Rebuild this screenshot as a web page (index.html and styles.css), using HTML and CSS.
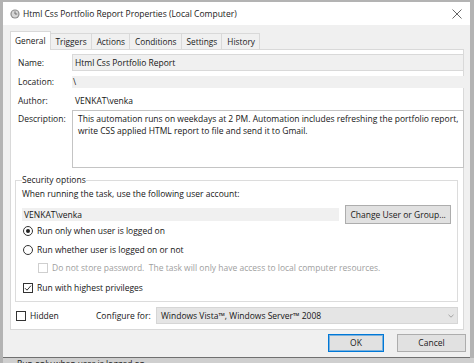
FILE: index.html
```html
<!DOCTYPE html>
<html>
<head>
<meta charset="utf-8">
<link rel="stylesheet" href="styles.css">
</head>
<body>
<div class="screen">
  <div class="window">
    <div class="titlebar">
      <svg class="appicon" width="10" height="10" viewBox="0 0 10 10">
        <circle cx="5" cy="5" r="4.6" fill="#8c8c8c"/>
        <circle cx="5" cy="5" r="3.4" fill="#d6d6d6"/>
        <path d="M5 2.4 V5 H7.2" stroke="#6e6e6e" stroke-width="1" fill="none"/>
      </svg>
      <span class="title">Html Css Portfolio Report Properties (Local Computer)</span>
      <svg class="close" width="10" height="10" viewBox="0 0 10 10">
        <path d="M0.5 0.5 L9.5 9.5 M9.5 0.5 L0.5 9.5" stroke="#555" stroke-width="0.9" fill="none"/>
      </svg>
    </div>
    <div class="client">
      <div class="tabs">
        <div class="tab active">General</div>
        <div class="tab">Triggers</div>
        <div class="tab">Actions</div>
        <div class="tab">Conditions</div>
        <div class="tab">Settings</div>
        <div class="tab">History</div>
      </div>
      <div class="panel">
        <div class="form">
          <div class="lbl">Name:</div>
          <div class="field name">Html Css Portfolio Report</div>
          <div class="lbl loc-lbl">Location:</div>
          <div class="field loc">\</div>
          <div class="lbl author-lbl">Author:</div>
          <div class="field author">VENKAT\venka</div>
          <div class="lbl desc-lbl">Description:</div>
          <div class="field desc">This automation runs on weekdays at 2 PM. Automation includes refreshing the portfolio report,<br>write CSS applied HTML report to file and send it to Gmail.</div>
        </div>
        <fieldset class="group">
          <legend>Security options</legend>
          <div class="when">When running the task, use the following user account:</div>
          <div class="user-row">
            <div class="userbar">VENKAT\venka</div>
            <div class="btn change">Change User or Group...</div>
          </div>
          <div class="opt r1"><span class="radio checked"></span><span>Run only when user is logged on</span></div>
          <div class="opt r2"><span class="radio"></span><span>Run whether user is logged on or not</span></div>
          <div class="opt sub disabled"><span class="cb"></span><span>Do not store password.&nbsp; The task will only have access to local computer resources.</span></div>
          <div class="opt hp"><span class="cb checked"><svg width="8" height="8" viewBox="0 0 8 8"><path d="M1 4.2 L3 6.2 L7 1.6" stroke="#333" stroke-width="1" fill="none"/></svg></span><span>Run with highest privileges</span></div>
        </fieldset>
        <div class="config-row">
          <div class="hidden-opt"><span class="cb"></span><span>Hidden</span></div>
          <div class="cfg-lbl">Configure for:</div>
          <div class="combo">
            <span>Windows Vista™, Windows Server™ 2008</span>
            <svg class="arrow" width="6" height="4" viewBox="0 0 6 4"><path d="M0.5 0.8 L3 3.2 L5.5 0.8" stroke="#9a9a9a" stroke-width="0.9" fill="none"/></svg>
          </div>
        </div>
      </div>
      <div class="buttons">
        <div class="btn ok">OK</div>
        <div class="btn cancel">Cancel</div>
      </div>
    </div>
  </div>
  <div class="behind"><span>Run only when user is logged on</span></div>
</div>
</body>
</html>
```

FILE: styles.css
```css
* { box-sizing: border-box; }

html, body {
  margin: 0;
  padding: 0;
}

body {
  width: 474px;
  height: 363px;
  overflow: hidden;
  background: #b3b3b3;
  font-family: "Open Sans", "Noto Sans", sans-serif;
  font-size: 8.5px;
  line-height: 12px;
  color: #161616;
}

.screen {
  display: flex;
  flex-direction: column;
  height: 363px;
}

.window {
  margin: 2px 4px 0 3px;
  height: 356px;
  background: #f0f0f0;
  display: flex;
  flex-direction: column;
  border-bottom: 1px solid #707070;
}

.titlebar {
  height: 23px;
  background: #ffffff;
  display: flex;
  align-items: center;
  padding-left: 7px;
}

.appicon { flex: none; }

.title {
  margin-left: 3px;
  font-size: 8.5px;
  color: #1a1a1a;
}

.close {
  margin-left: auto;
  margin-right: 8px;
}

.client {
  flex: 1;
  display: flex;
  flex-direction: column;
  padding: 6px 6px 0 7px;
}

.tabs {
  display: flex;
  align-items: flex-end;
  height: 18px;
  position: relative;
  z-index: 1;
}

.tab {
  height: 16px;
  line-height: 15px;
  padding: 0 4px 0 5px;
  border: 1px solid #d9d9d9;
  border-bottom: none;
  background: #f0f0f0;
  margin-left: -1px;
  color: #1a1a1a;
  font-size: 8.3px;
}

.tab.active {
  height: 19px;
  margin-bottom: -1px;
  margin-left: 0;
  background: #ffffff;
  line-height: 17px;
  padding: 0 4px 0 4px;
}

.panel {
  height: 281px;
  background: #ffffff;
  border: 1px solid #d9d9d9;
  padding: 4px 5px 5px 4px;
  display: flex;
  flex-direction: column;
}

.form {
  display: grid;
  grid-template-columns: 54px 1fr;
  margin-left: 3px;
  align-items: center;
}

.lbl { color: #1a1a1a; }

.field.name {
  height: 17px;
  background: #f0f0f0;
  border: 1px solid #d9d9d9;
  padding-left: 2px;
  line-height: 15px;
}

.loc-lbl, .field.loc { margin-top: 5px; }

.field.loc {
  height: 12px;
  background: #f0f0f0;
  padding-left: 1px;
}

.author-lbl, .field.author { margin-top: 7px; }

.field.author {
  padding-left: 3px;
}

.desc-lbl, .field.desc { margin-top: 3px; }

.desc-lbl {
  align-self: start;
  padding-top: 3px;
}

.field.desc {
  height: 58px;
  border: 1px solid #c4c4c4;
  padding: 2px 5px;
  white-space: nowrap;
}

.group {
  margin: 6px 0 0 0;
  border: 1px solid #dcdcdc;
  padding: 2px 6px 7px 6px;
  min-width: 0;
}

.group legend {
  padding: 0;
  line-height: 12px;
}

.user-row {
  display: flex;
  align-items: center;
  margin-top: 5px;
  height: 19px;
}

.userbar {
  width: 318px;
  height: 13px;
  line-height: 13px;
  background: #f0f0f0;
  padding-left: 2px;
}

.btn {
  background: #e1e1e1;
  border: 1px solid #adadad;
  display: flex;
  align-items: center;
  justify-content: center;
  color: #1a1a1a;
}

.btn.change {
  margin-left: 6px;
  width: 106px;
  height: 19px;
}

.opt {
  display: flex;
  align-items: center;
  height: 12px;
  gap: 4px;
}

.opt.r1 { margin-top: 1px; }
.opt.r2 { margin-top: 7px; }
.opt.sub { margin-top: 6px; padding-left: 16px; }
.opt.hp { margin-top: 8px; }

.opt.r1, .opt.r2, .opt.hp { padding-left: 1px; }

.radio {
  width: 10px;
  height: 10px;
  border: 1px solid #333;
  border-radius: 50%;
  display: flex;
  align-items: center;
  justify-content: center;
  flex: none;
}

.radio.checked::after {
  content: "";
  width: 4px;
  height: 4px;
  border-radius: 50%;
  background: #222;
}

.cb {
  width: 10px;
  height: 10px;
  border: 1px solid #333;
  background: #fff;
  display: flex;
  align-items: center;
  justify-content: center;
  flex: none;
}

.disabled { color: #a0a0a0; }
.disabled .cb { border-color: #cfcfcf; }

.config-row {
  display: flex;
  align-items: center;
  height: 17px;
  margin-top: 5px;
}

.hidden-opt {
  display: flex;
  align-items: center;
  gap: 4px;
  width: 81px;
  padding-left: 1px;
}

.cfg-lbl { width: 60px; }

.combo {
  margin-left: auto;
  width: 302px;
  height: 17px;
  background: #e5e5e5;
  border: 1px solid #d6d6d6;
  display: flex;
  align-items: center;
  padding: 0 3px 0 4px;
}

.combo .arrow { margin-left: auto; }

.buttons {
  display: flex;
  justify-content: flex-end;
  margin-top: 4px;
  margin-right: -2px;
  gap: 13px;
}

.btn.ok {
  width: 56px;
  height: 18px;
  border-color: #0078d7;
  box-shadow: inset 0 0 0 1px rgba(0, 120, 215, 0.45);
}

.btn.cancel {
  width: 69px;
  height: 18px;
}

.behind {
  height: 5px;
  overflow: hidden;
  margin-left: 3px;
  background: #cfcfcf;
  padding-left: 14px;
}

.behind span {
  display: block;
  line-height: 12px;
  margin-top: 0;
  color: #222;
}
```
